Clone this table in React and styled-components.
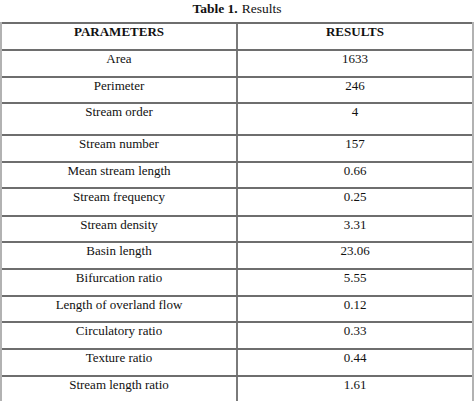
import React from "react";
import styled, { createGlobalStyle } from "styled-components";

const serif = `"Liberation Serif", "Times New Roman", Times, serif`;

const Global = createGlobalStyle`
  html, body { margin: 0; padding: 0; background: #ffffff; }
  body { font-family: ${serif}; color: #111; }
`;

const Page = styled.div`
  width: 474px;
  height: 401px;
  overflow: hidden;
  background: #fff;
  font-family: ${serif};
`;

const Caption = styled.div`
  height: 22px;
  display: flex;
  align-items: center;
  justify-content: center;
  font-family: ${serif};
  font-size: 13.5px;
  line-height: 15px;
  padding-bottom: 5px;
  box-sizing: border-box;
  color: #111;
`;

const CaptionLabel = styled.span`
  font-weight: 700;
  margin-right: 4px;
`;

const Table = styled.div`
  width: 474px;
  box-sizing: border-box;
  border-left: 2px solid #b2b2b2;
  border-right: 2px solid #b2b2b2;
`;

const Row = styled.div`
  display: grid;
  grid-template-columns: 236px 1fr;
  height: ${(p) => p.$h}px;
  box-sizing: border-box;
  border-top: 2px solid #6e6e6e;
`;

const Cell = styled.div`
  box-sizing: border-box;
  text-align: center;
  font-family: ${serif};
  font-size: 13px;
  line-height: 15px;
  color: #111;
  font-weight: ${(p) => (p.$head ? 700 : 400)};
  &:first-child { border-right: 2px solid #7a7a7a; }
`;

const rows = [
  ["Area", "1633", 27],
  ["Perimeter", "246", 26],
  ["Stream order", "4", 32],
  ["Stream number", "157", 27],
  ["Mean stream length", "0.66", 26],
  ["Stream frequency", "0.25", 28],
  ["Stream density", "3.31", 26],
  ["Basin length", "23.06", 27],
  ["Bifurcation ratio", "5.55", 27],
  ["Length of overland flow", "0.12", 26],
  ["Circulatory ratio", "0.33", 27],
  ["Texture ratio", "0.44", 27],
  ["Stream length ratio", "1.61", 28],
];

export default function App() {
  return (
    <Page>
      <Global />
      <Caption>
        <CaptionLabel>Table 1.</CaptionLabel>Results
      </Caption>
      <Table>
        <Row $h={27}>
          <Cell $head>PARAMETERS</Cell>
          <Cell $head>RESULTS</Cell>
        </Row>
        {rows.map(([k, v, h]) => (
          <Row key={k} $h={h}>
            <Cell>{k}</Cell>
            <Cell>{v}</Cell>
          </Row>
        ))}
      </Table>
    </Page>
  );
}
